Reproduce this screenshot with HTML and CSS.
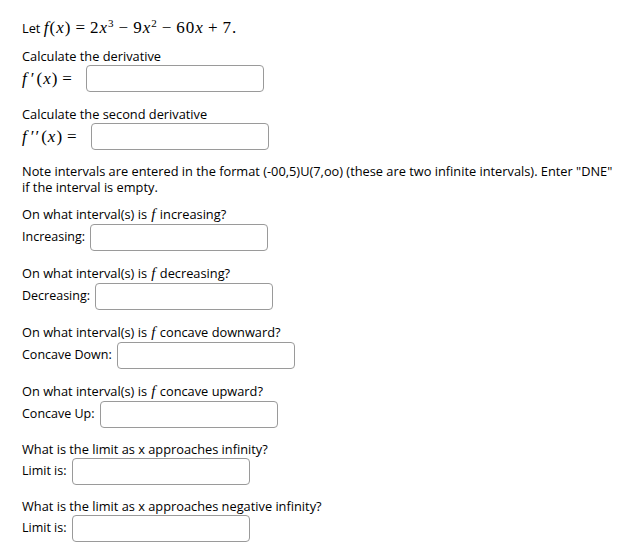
FILE: index.html
```html
<!DOCTYPE html>
<html lang="en">
<head>
    <meta charset="UTF-8">
    <meta name="viewport" content="width=device-width, initial-scale=1.0">
    <title>Problem</title>
    <link rel="stylesheet" href="styles.css">
</head>
<body>
    <div class="problem">
        <p class="intro">Let <span class="math"><i>f</i>(<i>x</i>)<span class="op">=</span>2<i>x</i><sup>3</sup><span class="op">&minus;</span>9<i>x</i><sup>2</sup><span class="op">&minus;</span>60<i>x</i><span class="op">+</span>7.</span></p>

        <!-- derivadas -->
        <div class="part calc">
            <div class="ask">Calculate the derivative</div>
            <div class="answer formula">
                <span class="math"><i>f</i><span class="prime">&prime;</span>(<i>x</i>)<span class="op">=</span></span>
                <input type="text">
            </div>
        </div>
        <div class="part calc">
            <div class="ask">Calculate the second derivative</div>
            <div class="answer formula">
                <span class="math"><i>f</i><span class="prime">&prime;&prime;</span>(<i>x</i>)<span class="op">=</span></span>
                <input type="text">
            </div>
        </div>

        <p class="note">Note intervals are entered in the format (-00,5)U(7,oo) (these are two infinite intervals). Enter "DNE"<br>if the interval is empty.</p>

        <!-- intervalos -->
        <div class="part">
            <div class="ask with-math">On what interval(s) is <i class="mv">f</i> increasing?</div>
            <label class="answer"><span class="label">Increasing:</span><input type="text"></label>
        </div>
        <div class="part">
            <div class="ask with-math">On what interval(s) is <i class="mv">f</i> decreasing?</div>
            <label class="answer"><span class="label">Decreasing:</span><input type="text"></label>
        </div>
        <div class="part">
            <div class="ask with-math">On what interval(s) is <i class="mv">f</i> concave downward?</div>
            <label class="answer"><span class="label">Concave Down:</span><input type="text"></label>
        </div>
        <div class="part">
            <div class="ask with-math">On what interval(s) is <i class="mv">f</i> concave upward?</div>
            <label class="answer"><span class="label">Concave Up:</span><input type="text"></label>
        </div>

        <!-- limites -->
        <div class="part">
            <div class="ask">What is the limit as x approaches infinity?</div>
            <label class="answer"><span class="label">Limit is:</span><input type="text"></label>
        </div>
        <div class="part">
            <div class="ask">What is the limit as x approaches negative infinity?</div>
            <label class="answer"><span class="label">Limit is:</span><input type="text"></label>
        </div>
    </div>
</body>
</html>
```

FILE: styles.css
```css
/* General */
body {
    margin: 0;
    background: #fff;
    color: #000;
    font-family: "Open Sans", "Noto Sans", sans-serif;
    font-size: 12.8px;
}

.problem {
    padding: 17px 12px 0 22px;
}

/* Math in serif, like MathJax */
.math,
.mv {
    font-family: "Liberation Serif", "DejaVu Serif", serif;
    line-height: 1;
}
.math {
    font-size: 17px;
    letter-spacing: 1px;
}
.mv {
    font-size: 15px;
    padding: 0 1px;
}
.math .op {
    margin: 0 4px;
}
.math .prime {
    margin: 0 1px 0 3px;
}
.math sup {
    font-size: 65%;
    line-height: 0;
    vertical-align: 0.55em;
}

.intro {
    margin: 0 0 8px;
    line-height: 22px;
}

/* Each question */
.part {
    margin-bottom: 12px;
}
.part.calc {
    margin-bottom: 13px;
}
.ask {
    line-height: 18px;
}
.ask.with-math {
    line-height: 20px;
}

.answer {
    display: flex;
    align-items: center;
    gap: 5px;
    height: 27px;
    line-height: 17px;
}
.answer.formula {
    gap: 9px;
}
.answer .label {
    font-size: 12.5px;
    padding-bottom: 3px;
}
.answer input {
    box-sizing: border-box;
    width: 178px;
    height: 27px;
    margin: 0;
    padding: 0 4px;
    border: 1px solid #9a9a9a;
    border-radius: 4px;
    background: #fff;
    font: inherit;
}

.note {
    margin: 0 0 9px;
    line-height: 16px;
    white-space: nowrap;
}
```
